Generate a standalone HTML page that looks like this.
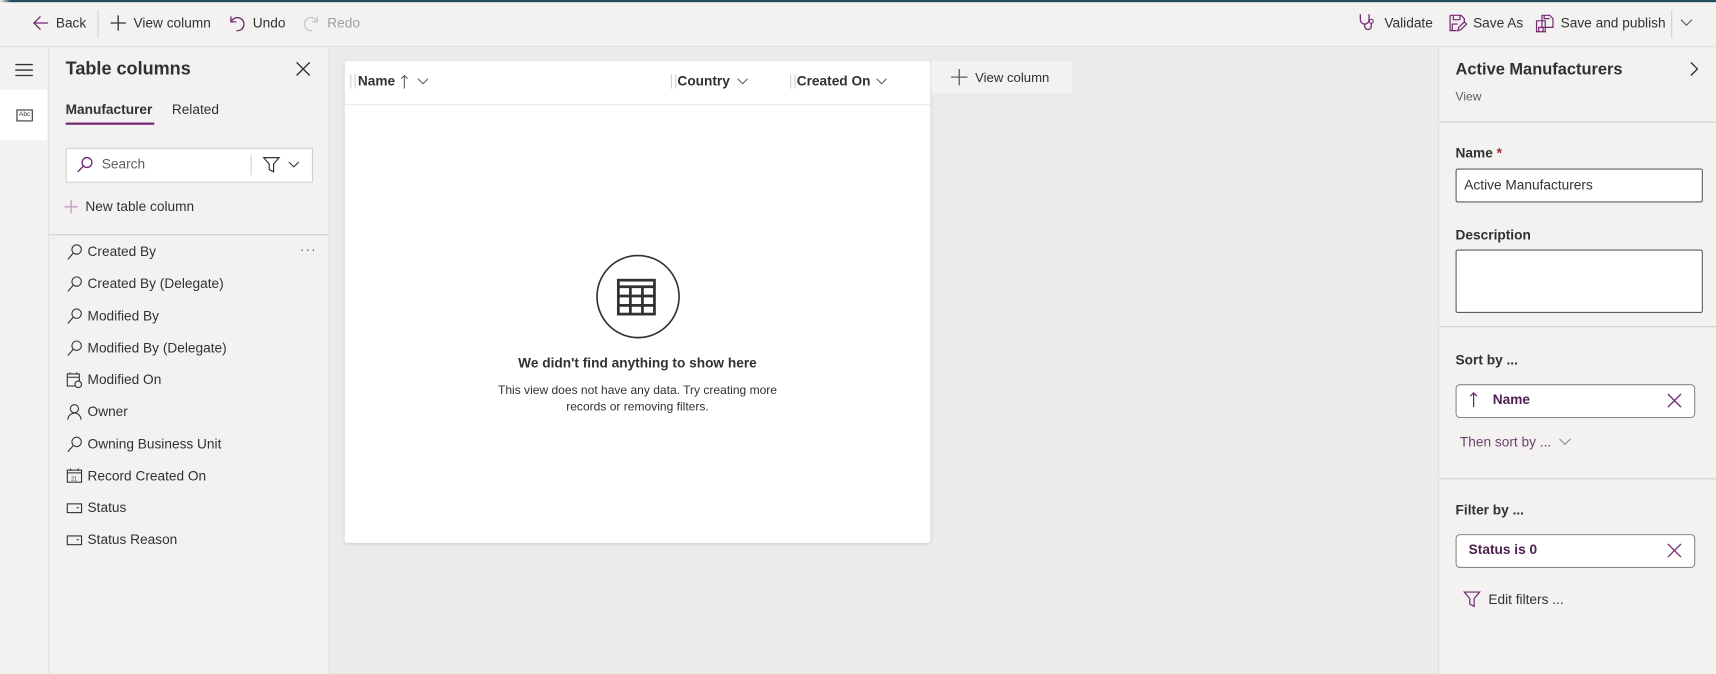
<!DOCTYPE html>
<html><head><meta charset="utf-8"><style>
html,body{margin:0;padding:0;width:1716px;height:674px;overflow:hidden;background:#edebe9}
#w{position:absolute;left:0;top:0;width:1568px;height:616px;transform:scale(1.0944);transform-origin:0 0;font-family:"Liberation Sans",sans-serif;font-size:12.5px;color:#323130;background:#edebe9}
.a{position:absolute}
.t{position:absolute;white-space:nowrap}
svg{position:absolute;overflow:visible}
.lbl{font-weight:bold;font-size:12.5px;color:#323130}
</style></head><body><div id="w">
<div class="a" style="left:0;top:0;width:1568px;height:42px;background:#f3f2f1;border-bottom:1px solid #e1dfdd"></div>
<div class="a" style="left:0;top:0;width:1568px;height:2px;background:linear-gradient(90deg,#f3f2f1 0,#1f4e5a 10px,#1f4e5a 100%)"></div>
<svg style="left:29px;top:13px" width="16" height="16"><path d="M15 8H2M8 2L2 8l6 6" stroke="#742774" fill="none" stroke-width="1.2"/></svg>
<div class="t" style="left:51px;top:14px">Back</div>
<div class="a" style="left:89px;top:9px;width:1px;height:26px;background:#d2d0ce"></div>
<svg style="left:100px;top:13px" width="16" height="16"><path d="M8 1v14M1 8h14" stroke="#323130" fill="none" stroke-width="1.2"/></svg>
<div class="t" style="left:122px;top:14px">View column</div>
<svg style="left:209px;top:13px" width="14" height="16"><path d="M2 2v5h5M2.5 6.5A6 6 0 1 1 7 15" stroke="#742774" fill="none" stroke-width="1.2"/></svg>
<div class="t" style="left:231px;top:14px">Undo</div>
<svg style="left:278px;top:13px" width="14" height="16"><path d="M12 2v5H7M11.5 6.5A6 6 0 1 0 7 15" stroke="#c8c6c4" fill="none" stroke-width="1.2"/></svg>
<div class="t" style="left:299px;top:14px;color:#a19f9d">Redo</div>
<svg style="left:1241px;top:12px" width="18" height="18"><path d="M2 1v5a4 4 0 0 0 8 0V1M6 10v2a3 3 0 0 0 6 0V9" stroke="#742774" fill="none" stroke-width="1.2"/><circle cx="12" cy="7.5" r="1.8" stroke="#742774" fill="none"/></svg>
<div class="t" style="left:1265px;top:14px">Validate</div>
<svg style="left:1324px;top:13px" width="16" height="16"><path d="M1 1h10l3 3v4M1 1v14h6M4 1v4h6V1M3 15V9h5" stroke="#742774" fill="none" stroke-width="1.1"/><path d="M8 15l1-3 5-5 2 2-5 5z" stroke="#742774" fill="none" stroke-width="1.1"/></svg>
<div class="t" style="left:1346px;top:14px">Save As</div>
<svg style="left:1403px;top:13px" width="17" height="17"><path d="M6 1h7l3 3v8H6zM1 6h8v10H1zM3 16v-4h4v4M8 1v3h5" stroke="#742774" fill="none" stroke-width="1.1"/></svg>
<div class="t" style="left:1426px;top:14px">Save and publish</div>
<div class="a" style="left:1527px;top:9px;width:1px;height:26px;background:#d2d0ce"></div>
<svg style="left:1535px;top:17px" width="12" height="8"><path d="M1 1l5 5 5-5" stroke="#605e5c" fill="none"/></svg>

<div class="a" style="left:0;top:43px;width:44px;height:573px;background:#f3f2f1;border-right:1px solid #e1dfdd"></div>
<svg style="left:14px;top:58px" width="16" height="12"><path d="M0 1h16M0 6h16M0 11h16" stroke="#323130" stroke-width="1.2"/></svg>
<div class="a" style="left:0;top:82px;width:43px;height:46px;background:#fff"></div>
<div class="a" style="left:15px;top:100px;width:13px;height:9px;border:1px solid #323130;font-size:6px;line-height:9px;text-align:center;color:#323130">Abc</div>

<div class="a" style="left:45px;top:43px;width:255px;height:573px;background:#f3f2f1;border-right:1px solid #e1dfdd"></div>
<div class="t" style="left:60px;top:54px;font-size:16.5px;font-weight:bold;color:#323130">Table columns</div>
<svg style="left:271px;top:57px" width="12" height="12"><path d="M0 0l12 12M12 0L0 12" stroke="#323130" stroke-width="1.2"/></svg>
<div class="t" style="left:60px;top:93px;font-weight:bold;color:#323130">Manufacturer</div>
<div class="a" style="left:60px;top:112px;width:81px;height:2px;background:#742774"></div>
<div class="t" style="left:157px;top:93px">Related</div>
<div class="a" style="left:60px;top:135px;width:224px;height:30px;background:#fff;border:1px solid #d2d0ce"></div>
<svg style="left:70px;top:143px" width="15" height="15"><circle cx="9.5" cy="5.5" r="4.5" stroke="#742774" fill="none" stroke-width="1.2"/><path d="M6.3 8.7L1 14" stroke="#742774" stroke-width="1.3"/></svg>
<div class="t" style="left:93px;top:143px;color:#605e5c">Search</div>
<div class="a" style="left:229px;top:142px;width:1px;height:18px;background:#d2d0ce"></div>
<svg style="left:240px;top:143px" width="16" height="15"><path d="M1 1h14L10 7v7L6 12V7z" stroke="#323130" fill="none" stroke-width="1.1"/></svg>
<svg style="left:263px;top:147px" width="11" height="7"><path d="M1 1l4.5 4.5L10 1" stroke="#323130" fill="none"/></svg>
<svg style="left:59px;top:183px" width="12" height="12"><path d="M6 0v12M0 6h12" stroke="#c19ac1" stroke-width="1.2"/></svg>
<div class="t" style="left:78px;top:182px">New table column</div>
<div class="a" style="left:45px;top:214px;width:255px;height:1px;background:#d2d0ce"></div>
<div class="t" style="left:274px;top:221px;color:#605e5c;letter-spacing:1px">···</div>

<svg style="left:61px;top:222px" width="14" height="300">
<g stroke="#323130" fill="none" stroke-width="1">
<circle cx="9" cy="6" r="4.3"/><path d="M6 9.2L1 15"/>
<g transform="translate(0,29.3)"><circle cx="9" cy="6" r="4.3"/><path d="M6 9.2L1 15"/></g>
<g transform="translate(0,58.6)"><circle cx="9" cy="6" r="4.3"/><path d="M6 9.2L1 15"/></g>
<g transform="translate(0,87.9)"><circle cx="9" cy="6" r="4.3"/><path d="M6 9.2L1 15"/></g>
<g transform="translate(0,117.2)"><rect x="0.5" y="2.5" width="11" height="11"/><path d="M0.5 5.5h11M3 1v2M9 1v2"/><circle cx="10.5" cy="12" r="3" fill="#f3f2f1"/></g>
<g transform="translate(0,146.5)"><circle cx="7" cy="5" r="3.7"/><path d="M1 15a6 6 0 0 1 12 0"/></g>
<g transform="translate(0,175.8)"><circle cx="9" cy="6" r="4.3"/><path d="M6 9.2L1 15"/></g>
<g transform="translate(0,205.1)"><rect x="0.5" y="2.5" width="13" height="11"/><path d="M0.5 5h13M3.5 1v2M10.5 1v2"/><text x="4" y="12" font-size="5" fill="#323130" stroke="none" font-family="Liberation Sans">21</text></g>
<g transform="translate(0,234.4)"><rect x="0.5" y="4" width="13" height="8"/><path d="M9 7.5h2"/></g>
<g transform="translate(0,263.7)"><rect x="0.5" y="4" width="13" height="8"/><path d="M9 7.5h2"/></g>
</g></svg>
<div class="t" style="left:80px;top:223px">Created By</div>
<div class="t" style="left:80px;top:252px">Created By (Delegate)</div>
<div class="t" style="left:80px;top:282px">Modified By</div>
<div class="t" style="left:80px;top:311px">Modified By (Delegate)</div>
<div class="t" style="left:80px;top:340px">Modified On</div>
<div class="t" style="left:80px;top:369px">Owner</div>
<div class="t" style="left:80px;top:399px">Owning Business Unit</div>
<div class="t" style="left:80px;top:428px">Record Created On</div>
<div class="t" style="left:80px;top:457px">Status</div>
<div class="t" style="left:80px;top:486px">Status Reason</div>

<div class="a" style="left:315px;top:56px;width:535px;height:440px;background:#fff;box-shadow:0 1px 3px rgba(0,0,0,.12);border-radius:2px"></div>
<div class="a" style="left:315px;top:95px;width:535px;height:1px;background:#edebe9"></div>
<div class="a" style="left:320px;top:68px;width:3px;height:13px;border-left:1px solid #d2d0ce;border-right:1px solid #d2d0ce"></div>
<div class="t" style="left:327px;top:67px;font-weight:bold">Name</div>
<svg style="left:366px;top:68px" width="7" height="13"><path d="M3.5 13V1M0.5 4l3-3 3 3" stroke="#605e5c" fill="none"/></svg>
<svg style="left:381px;top:71px" width="11" height="7"><path d="M1 1l4.5 4.5L10 1" stroke="#605e5c" fill="none"/></svg>
<div class="a" style="left:613px;top:68px;width:3px;height:13px;border-left:1px solid #d2d0ce;border-right:1px solid #d2d0ce"></div>
<div class="t" style="left:619px;top:67px;font-weight:bold">Country</div>
<svg style="left:673px;top:71px" width="11" height="7"><path d="M1 1l4.5 4.5L10 1" stroke="#605e5c" fill="none"/></svg>
<div class="a" style="left:722px;top:68px;width:3px;height:13px;border-left:1px solid #d2d0ce;border-right:1px solid #d2d0ce"></div>
<div class="t" style="left:728px;top:67px;font-weight:bold">Created On</div>
<svg style="left:800px;top:71px" width="11" height="7"><path d="M1 1l4.5 4.5L10 1" stroke="#605e5c" fill="none"/></svg>
<div class="a" style="left:851px;top:56px;width:129px;height:29px;background:#f3f2f1"></div>
<svg style="left:869px;top:63px" width="15" height="15"><path d="M7.5 0v15M0 7.5h15" stroke="#605e5c" stroke-width="1.2"/></svg>
<div class="t" style="left:891px;top:64px;font-size:12px">View column</div>
<svg style="left:544px;top:232px" width="78" height="78"><circle cx="39" cy="39" r="37.5" stroke="#323130" fill="none" stroke-width="1.5"/><g stroke="#323130" stroke-width="2.5" fill="none"><rect x="21" y="24" width="33" height="31"/><path d="M21 30h33M21 38.5h33M21 47h33M32 30v25M43 30v25"/></g></svg>
<div class="t" style="left:315px;top:325px;width:535px;text-align:center;font-weight:bold;font-size:12.5px">We didn't find anything to show here</div>
<div class="t" style="left:315px;top:350px;width:535px;text-align:center;font-size:11px;line-height:15px;white-space:normal"><div style="width:270px;margin:0 auto">This view does not have any data. Try creating more records or removing filters.</div></div>

<div class="a" style="left:1314px;top:43px;width:254px;height:573px;background:#f3f2f1;border-left:1px solid #e1dfdd"></div>
<div class="t" style="left:1330px;top:55px;font-size:15px;font-weight:bold">Active Manufacturers</div>
<svg style="left:1544px;top:56px" width="8" height="14"><path d="M1 1l6 6-6 6" stroke="#323130" fill="none" stroke-width="1.2"/></svg>
<div class="t" style="left:1330px;top:83px;font-size:11px;color:#605e5c">View</div>
<div class="a" style="left:1315px;top:111px;width:253px;height:1px;background:#d2d0ce"></div>
<div class="t lbl" style="left:1330px;top:133px">Name <span style="color:#a4262c">*</span></div>
<div class="a" style="left:1330px;top:154px;width:224px;height:29px;background:#fff;border:1px solid #605e5c;border-radius:2px"></div>
<div class="t" style="left:1338px;top:162px">Active Manufacturers</div>
<div class="t lbl" style="left:1330px;top:208px">Description</div>
<div class="a" style="left:1330px;top:228px;width:224px;height:56px;background:#fff;border:1px solid #605e5c;border-radius:2px"></div>
<div class="a" style="left:1315px;top:298px;width:253px;height:1px;background:#d2d0ce"></div>
<div class="t lbl" style="left:1330px;top:322px">Sort by ...</div>
<div class="a" style="left:1330px;top:351px;width:217px;height:29px;background:#fff;border:1px solid #8a8886;border-radius:4px"></div>
<svg style="left:1343px;top:358px" width="7" height="14"><path d="M3.5 14V1M0.5 4l3-3 3 3" stroke="#742774" fill="none" stroke-width="1.1"/></svg>
<div class="t" style="left:1364px;top:358px;font-weight:bold;color:#4b2150">Name</div>
<svg style="left:1524px;top:360px" width="12" height="12"><path d="M0 0l12 12M12 0L0 12" stroke="#742774" stroke-width="1.2"/></svg>
<div class="t" style="left:1334px;top:397px;color:#6b3f6b">Then sort by ...</div>
<svg style="left:1424px;top:400px" width="12" height="7"><path d="M1 1l5 5 5-5" stroke="#8a8886" fill="none"/></svg>
<div class="a" style="left:1315px;top:437px;width:253px;height:1px;background:#d2d0ce"></div>
<div class="t lbl" style="left:1330px;top:459px">Filter by ...</div>
<div class="a" style="left:1330px;top:488px;width:217px;height:29px;background:#fff;border:1px solid #8a8886;border-radius:4px"></div>
<div class="t" style="left:1342px;top:495px;font-weight:bold;color:#4b2150">Status is 0</div>
<svg style="left:1524px;top:497px" width="12" height="12"><path d="M0 0l12 12M12 0L0 12" stroke="#742774" stroke-width="1.2"/></svg>
<svg style="left:1337px;top:540px" width="16" height="15"><path d="M1 1h14L10 7v7L6 12V7z" stroke="#742774" fill="none" stroke-width="1.1"/></svg>
<div class="t" style="left:1360px;top:541px">Edit filters ...</div>
</div></body></html>
